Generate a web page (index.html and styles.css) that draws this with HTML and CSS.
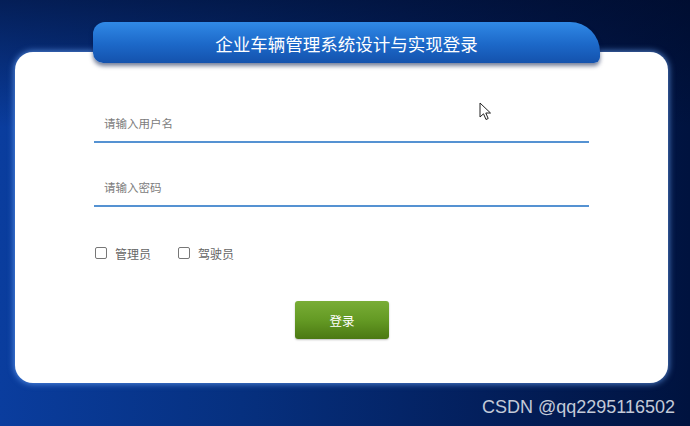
FILE: index.html
```html
<!DOCTYPE html>
<html lang="zh">
<head>
<meta charset="utf-8">
<title>企业车辆管理系统设计与实现登录</title>
<link rel="stylesheet" href="styles.css">
</head>
<body>
<div class="page">
  <div class="tab"><span class="tab-title">企业车辆管理系统设计与实现登录</span></div>
  <div class="card">
    <form class="form">
      <div class="field"><input class="input" type="text" placeholder="请输入用户名"></div>
      <div class="field second"><input class="input" type="password" placeholder="请输入密码"></div>
      <div class="roles">
        <label class="role"><span class="box"></span><span>管理员</span></label>
        <label class="role"><span class="box"></span><span>驾驶员</span></label>
      </div>
      <div class="actions"><button class="btn" type="button">登录</button></div>
    </form>
  </div>
  <div class="watermark">CSDN @qq2295116502</div>
</div>
<svg class="cursor" width="13" height="19" viewBox="0 0 13 19"><path d="M1 1 L1 15 L4.5 11.8 L7 17.5 L9.2 16.5 L6.8 11 L11.5 11 Z" fill="#fff" stroke="#222" stroke-width="1" stroke-linejoin="round"/></svg>
</body>
</html>
```
FILE: styles.css
```css
* { box-sizing: border-box; }
html, body { margin: 0; padding: 0; }
body {
  width: 690px;
  height: 426px;
  overflow: hidden;
  font-family: "Noto Sans CJK SC", "Liberation Sans", sans-serif;
  background:
    linear-gradient(to bottom, rgba(0,10,40,0.6) 0%, rgba(0,10,40,0) 30%),
    linear-gradient(to right, #0a3d9e 0%, #06307f 35%, #031f5c 70%, #00133f 100%);
  position: relative;
}
.page {
  display: flex;
  flex-direction: column;
  padding: 22px 22px 0 15px;
}
.tab {
  position: relative;
  z-index: 2;
  margin-left: 78px;
  width: 507px;
  height: 41px;
  border-radius: 12px 30px 6px 10px;
  background: linear-gradient(to bottom, #3089e6 0%, #1c68c8 55%, #1452ad 100%);
  box-shadow: 0 3px 4px rgba(0, 20, 70, 0.55);
  display: flex;
  align-items: center;
  justify-content: center;
}
.tab-title {
  color: #fff;
  font-size: 17.5px;
  padding-top: 1px;
}
.card {
  margin-top: -11px;
  width: 653px;
  height: 331px;
  background: #fff;
  border-radius: 18px;
  box-shadow: 0 0 6px 1px rgba(110, 170, 255, 0.7);
  padding: 53px 79px 0 79px;
}
.form {
  display: flex;
  flex-direction: column;
  width: 495px;
}
.field {
  height: 38px;
  border-bottom: 2px solid #5592d2;
  display: flex;
}
.field.second { margin-top: 26px; }
.input {
  border: 0;
  outline: 0;
  background: transparent;
  width: 100%;
  height: 36px;
  padding: 0 0 0 10px;
  font-family: inherit;
  font-size: 11.5px;
  color: #555;
}
.input::placeholder { color: #7c7c7c; }
.roles {
  margin-top: 36px;
  height: 20px;
  display: flex;
  align-items: center;
  gap: 27px;
  padding-left: 1px;
}
.role {
  display: flex;
  align-items: center;
  gap: 8px;
  font-size: 12px;
  color: #666;
}
.box {
  width: 12px;
  height: 12px;
  border: 1px solid #777;
  border-radius: 2px;
  background: #fff;
}
.actions {
  margin-top: 38px;
  display: flex;
  justify-content: center;
}
.btn {
  width: 94px;
  height: 38px;
  border: 0;
  border-radius: 3px;
  background: linear-gradient(to bottom, #79ad36 0%, #649a24 50%, #4b7812 100%);
  box-shadow: 0 1px 2px rgba(0,0,0,0.25);
  color: #fff;
  font-family: inherit;
  font-size: 12.5px;
  margin-left: 1px;
}
.watermark {
  margin-top: 14px;
  align-self: flex-end;
  margin-right: -7px;
  font-family: "Liberation Sans", Arial, sans-serif;
  font-size: 18px;
  color: #c3cad8;
}
.cursor {
  position: absolute;
  left: 479px;
  top: 102px;
}
```
